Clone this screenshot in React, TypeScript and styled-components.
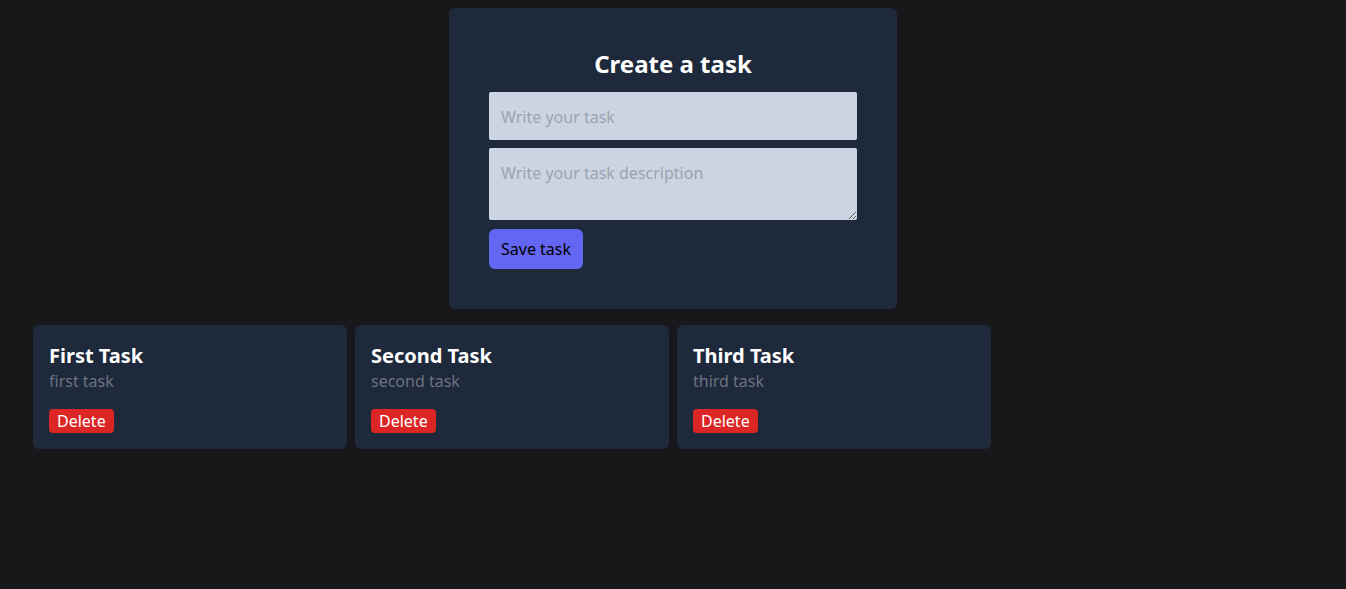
import React from "react";
import styled, { createGlobalStyle } from "styled-components";

const Global = createGlobalStyle`
  html, body { background: #18181b; }
  body {
    margin: 8px;
    font-family: "Noto Sans", "Open Sans", sans-serif;
    color: #ffffff;
  }
  * { box-sizing: border-box; }
`;

const Page = styled.div`
  display: flex;
  flex-direction: column;
  align-items: center;
`;

const FormCard = styled.form`
  width: 448px;
  background: #1e293b;
  border-radius: 6px;
  padding: 40px;
  display: flex;
  flex-direction: column;
  margin-bottom: 16px;
`;

const Heading = styled.h1`
  margin: 0 0 12px;
  font-size: 24px;
  line-height: 32px;
  font-weight: 700;
  text-align: center;
  color: #ffffff;
`;

const fieldStyles = `
  width: 100%;
  border: none;
  outline: none;
  background: #cbd5e1;
  border-radius: 2px;
  padding: 13px 12px 11px;
  font-family: "Noto Sans", "Open Sans", sans-serif;
  font-size: 16px;
  line-height: 24px;
  color: #111827;
  &::placeholder { color: #9ca3af; }
`;

const TextInput = styled.input`
  ${fieldStyles}
  height: 48px;
  margin-bottom: 8px;
`;

const TextArea = styled.textarea`
  ${fieldStyles}
  display: block;
  height: 72px;
  margin-bottom: 9px;
`;

const SaveButton = styled.button`
  align-self: flex-start;
  background: #6366f1;
  border: none;
  border-radius: 6px;
  padding: 8px 12px;
  font-family: "Noto Sans", "Open Sans", sans-serif;
  font-size: 16px;
  line-height: 24px;
  color: #000000;
`;

const Grid = styled.div`
  width: 1280px;
  display: grid;
  grid-template-columns: repeat(4, 1fr);
  gap: 8px;
`;

const TaskCard = styled.div`
  background: #1e293b;
  border-radius: 6px;
  padding: 16px;
`;

const TaskTitle = styled.h2`
  margin: 0;
  padding-top: 2px;
  font-size: 20px;
  line-height: 26px;
  font-weight: 700;
  color: #ffffff;
`;

const TaskDesc = styled.p`
  margin: 0;
  font-size: 16px;
  line-height: 24px;
  color: #6b7280;
`;

const DeleteButton = styled.button`
  margin-top: 16px;
  background: #dc2626;
  border: none;
  border-radius: 4px;
  padding: 0 8px;
  font-family: "Noto Sans", "Open Sans", sans-serif;
  font-size: 16px;
  line-height: 24px;
  color: #ffffff;
`;

const tasks = [
  { title: "First Task", description: "first task" },
  { title: "Second Task", description: "second task" },
  { title: "Third Task", description: "third task" },
];

export default function App() {
  return (
    <>
      <Global />
      <Page>
        <FormCard onSubmit={(e) => e.preventDefault()}>
          <Heading>Create a task</Heading>
          <TextInput placeholder="Write your task" />
          <TextArea placeholder="Write your task description" />
          <SaveButton>Save task</SaveButton>
        </FormCard>
        <Grid>
          {tasks.map((t) => (
            <TaskCard key={t.title}>
              <TaskTitle>{t.title}</TaskTitle>
              <TaskDesc>{t.description}</TaskDesc>
              <DeleteButton>Delete</DeleteButton>
            </TaskCard>
          ))}
        </Grid>
      </Page>
    </>
  );
}
